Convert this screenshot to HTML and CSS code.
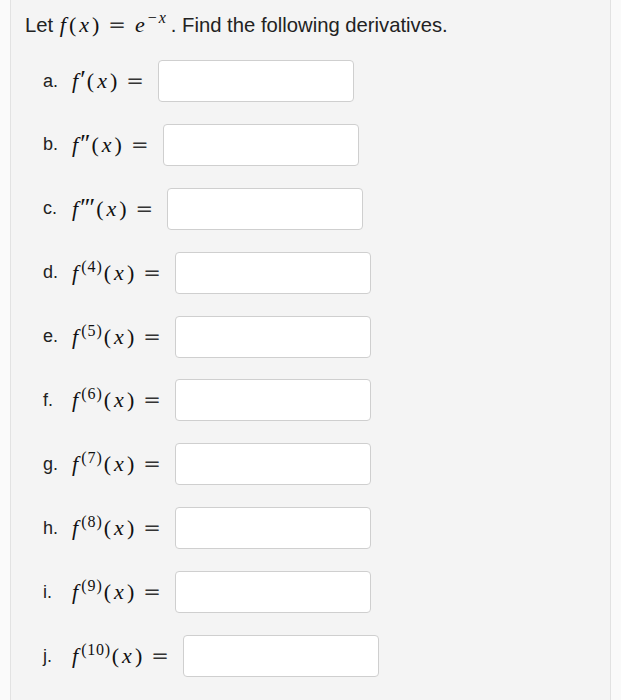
FILE: index.html
```html
<!DOCTYPE html>
<html>
<head>
<meta charset="utf-8">
<link rel="stylesheet" href="styles.css">
</head>
<body>
<div class="panel">
  <p class="title">Let <span class="m"><i class="f">f</i><span class="p">(</span><i class="x">x</i><span class="p">)</span><span class="eq">=</span><i class="e">e</i><sup class="tsup"><span class="mn">−</span><i>x</i></sup></span>. Find the following derivatives.</p>
  <ol class="list">
    <li class="row"><span class="lbl">a.</span><span class="m"><i class="f">f</i><span class="pr">′</span><span class="p">(</span><i class="x">x</i><span class="p">)</span><span class="eq">=</span></span><span class="box"></span></li>
    <li class="row"><span class="lbl">b.</span><span class="m"><i class="f">f</i><span class="pr">′′</span><span class="p">(</span><i class="x">x</i><span class="p">)</span><span class="eq">=</span></span><span class="box"></span></li>
    <li class="row"><span class="lbl">c.</span><span class="m"><i class="f">f</i><span class="pr">′′′</span><span class="p">(</span><i class="x">x</i><span class="p">)</span><span class="eq">=</span></span><span class="box"></span></li>
    <li class="row"><span class="lbl">d.</span><span class="m"><i class="f">f</i><sup>(4)</sup><span class="p">(</span><i class="x">x</i><span class="p">)</span><span class="eq">=</span></span><span class="box"></span></li>
    <li class="row"><span class="lbl">e.</span><span class="m"><i class="f">f</i><sup>(5)</sup><span class="p">(</span><i class="x">x</i><span class="p">)</span><span class="eq">=</span></span><span class="box"></span></li>
    <li class="row"><span class="lbl">f.</span><span class="m"><i class="f">f</i><sup>(6)</sup><span class="p">(</span><i class="x">x</i><span class="p">)</span><span class="eq">=</span></span><span class="box"></span></li>
    <li class="row"><span class="lbl">g.</span><span class="m"><i class="f">f</i><sup>(7)</sup><span class="p">(</span><i class="x">x</i><span class="p">)</span><span class="eq">=</span></span><span class="box"></span></li>
    <li class="row"><span class="lbl">h.</span><span class="m"><i class="f">f</i><sup>(8)</sup><span class="p">(</span><i class="x">x</i><span class="p">)</span><span class="eq">=</span></span><span class="box"></span></li>
    <li class="row"><span class="lbl">i.</span><span class="m"><i class="f">f</i><sup>(9)</sup><span class="p">(</span><i class="x">x</i><span class="p">)</span><span class="eq">=</span></span><span class="box"></span></li>
    <li class="row"><span class="lbl">j.</span><span class="m"><i class="f">f</i><sup class="s2">(10)</sup><span class="p">(</span><i class="x">x</i><span class="p">)</span><span class="eq">=</span></span><span class="box"></span></li>
  </ol>
</div>
</body>
</html>
```
FILE: styles.css
```css
html, body {
  margin: 0;
  padding: 0;
  background: #fafafa;
}
body {
  font-family: "Liberation Sans", Arial, sans-serif;
  color: #222;
}
.panel {
  margin: 0 10px;
  min-height: 700px;
  box-sizing: border-box;
  background: #f4f4f4;
  border-left: 1px solid #e2e2e2;
  border-right: 1px solid #e2e2e2;
  padding: 12px 0 0 14px;
}
.title {
  margin: 0;
  font-size: 20.25px;
  line-height: 26px;
}
.m {
  font-family: "Liberation Serif", "Times New Roman", serif;
  font-size: 22px;
  color: #111;
  white-space: nowrap;
}
.m i {
  font-style: italic;
}
.f {
  margin-left: 1px;
  margin-right: 2px;
}
.x {
  padding: 0 2px 0 2px;
}
.e {
  padding: 0 1px;
}
.p {
  padding: 0 1px;
}
.pr {
  font-family: "Liberation Serif", serif;
  font-size: 26px;
  line-height: 0;
  letter-spacing: -1px;
  padding-right: 1px;
  color: #111;
}
.eq {
  font-family: "DejaVu Serif", serif;
  font-size: 21px;
  color: #333;
  margin: 0 8px;
}
.m sup {
  font-size: 16px;
  line-height: 0;
  vertical-align: 8px;
  padding-left: 1px;
  letter-spacing: 1px;
}
.m sup.s2 {
  letter-spacing: 0.75px;
}
.m sup.tsup {
  font-size: 16px;
  vertical-align: 9px;
  letter-spacing: 0;
  padding-right: 5px;
}
.mn {
  padding: 0 2px 0 1px;
}
.list {
  list-style: none;
  margin: 0;
  padding: 22px 0 0 18px;
  display: flex;
  flex-direction: column;
  gap: 21.9px;
}
.row {
  display: flex;
  align-items: center;
  height: 42px;
}
.lbl {
  font-size: 18px;
  width: 28px;
  color: #222;
}
.m + .box {
  margin-left: 6px;
}
.box {
  width: 194px;
  height: 40px;
  background: #fff;
  border: 1px solid #cfcfcf;
  border-radius: 4px;
}
```
